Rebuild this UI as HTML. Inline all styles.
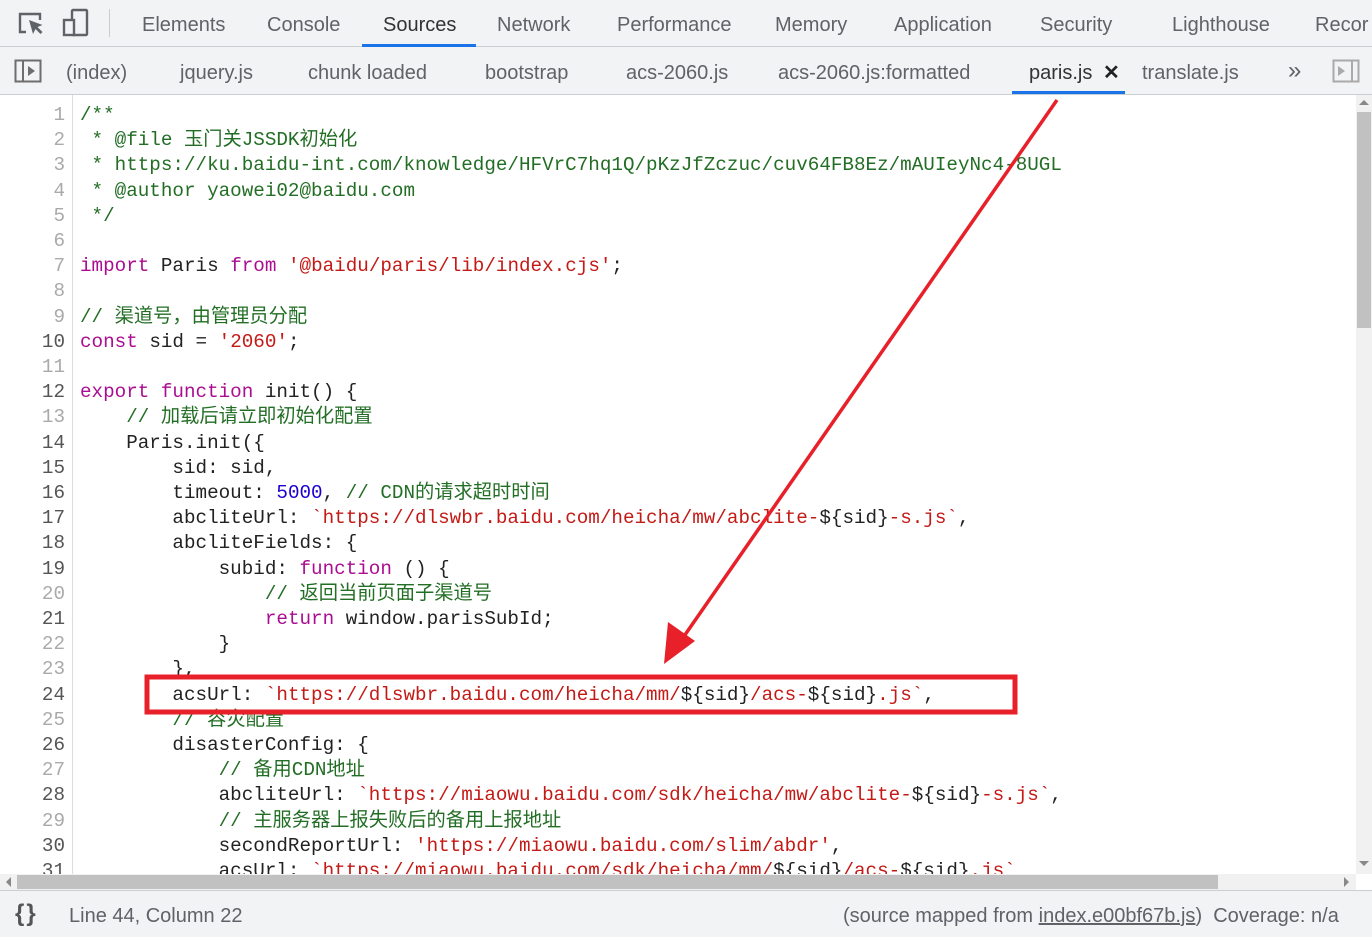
<!DOCTYPE html>
<html><head><meta charset="utf-8"><style>
*{margin:0;padding:0;box-sizing:border-box}
body{width:1372px;height:937px;overflow:hidden;background:#fff;position:relative;font-family:"Liberation Sans","Noto Sans CJK SC",sans-serif}
.bar{position:absolute;left:0;width:1372px;background:#f1f3f4;border-bottom:1px solid #cacdd1}
.t{position:absolute;font-size:20px;color:#5f6368;white-space:nowrap}
.ul{position:absolute;height:3px;background:#1a73e8}
#code{position:absolute;left:0;top:95px;width:1356px;height:779px;overflow:hidden}
.gut{position:absolute;left:72px;top:0;width:1px;height:779px;background:#ddd}
pre{font-family:"Liberation Mono","Noto Sans CJK SC",monospace;font-size:19.25px;line-height:25.2px;white-space:pre}
#nums{position:absolute;left:0;width:65px;top:8px;text-align:right;color:#aaa}
#nums b{font-weight:normal;color:#555}
#src{position:absolute;left:80px;top:8px;color:#222}
.c{color:#236e25}.k{color:#aa0d91}.s{color:#c41a16}.n{color:#1c00cf}
</style></head><body>
<div class="bar" style="top:0;height:47px"></div>
<svg style="position:absolute;left:16px;top:10px" width="30" height="28" viewBox="0 0 30 28"><path d="M10 22H4V4h20v6" fill="none" stroke="#5f6368" stroke-width="2.4"/><path d="M13 10l4 14 2.5-5 5 5 2-2-5-5 5-2z" fill="#5f6368"/></svg>
<svg style="position:absolute;left:62px;top:8px" width="30" height="30" viewBox="0 0 30 30"><rect x="10" y="2" width="15" height="25" rx="1" fill="none" stroke="#5f6368" stroke-width="2.4"/><rect x="2" y="12" width="10" height="15" fill="#f1f3f4" stroke="#5f6368" stroke-width="2.4"/></svg>
<div style="position:absolute;left:109px;top:9px;width:1px;height:28px;background:#ccc"></div>
<div class="t" style="left:142px;top:14px">Elements</div>
<div class="t" style="left:267px;top:14px">Console</div>
<div class="t" style="left:383px;top:14px;color:#333">Sources</div>
<div class="ul" style="left:362px;top:44px;width:114px"></div>
<div class="t" style="left:497px;top:14px">Network</div>
<div class="t" style="left:617px;top:14px">Performance</div>
<div class="t" style="left:775px;top:14px">Memory</div>
<div class="t" style="left:894px;top:14px">Application</div>
<div class="t" style="left:1040px;top:14px">Security</div>
<div class="t" style="left:1172px;top:14px">Lighthouse</div>
<div class="t" style="left:1315px;top:14px">Recor</div>

<div class="bar" style="top:47px;height:48px"></div>
<svg style="position:absolute;left:14px;top:59px" width="28" height="24" viewBox="0 0 28 24"><rect x="1.5" y="1.5" width="25" height="21" fill="none" stroke="#6e6e6e" stroke-width="2"/><line x1="9" y1="2" x2="9" y2="22" stroke="#6e6e6e" stroke-width="2"/><path d="M14 7v10l7-5z" fill="#6e6e6e"/></svg>
<div class="t" style="left:66px;top:62px">(index)</div>
<div class="t" style="left:180px;top:62px">jquery.js</div>
<div class="t" style="left:308px;top:62px">chunk loaded</div>
<div class="t" style="left:485px;top:62px">bootstrap</div>
<div class="t" style="left:626px;top:62px">acs-2060.js</div>
<div class="t" style="left:778px;top:62px">acs-2060.js:formatted</div>
<div class="t" style="left:1029px;top:62px;color:#333">paris.js</div>
<div class="t" style="left:1103px;top:60px;color:#222;font-weight:bold">✕</div>
<div class="ul" style="left:1012px;top:91px;width:113px"></div>
<div class="t" style="left:1142px;top:62px">translate.js</div>
<div class="t" style="left:1288px;top:57px;font-size:24px">»</div>
<svg style="position:absolute;left:1332px;top:59px" width="28" height="24" viewBox="0 0 28 24"><rect x="1.5" y="1.5" width="25" height="21" fill="none" stroke="#aaa" stroke-width="2"/><line x1="20" y1="2" x2="20" y2="22" stroke="#aaa" stroke-width="2"/><path d="M6 7v10l7-5z" fill="#aaa"/></svg>

<div id="code"><div class="gut"></div>
<pre id="nums">1
2
3
4
5
6
7
8
9
<b>10</b>
11
<b>12</b>
13
<b>14</b>
<b>15</b>
<b>16</b>
<b>17</b>
<b>18</b>
<b>19</b>
20
<b>21</b>
22
23
<b>24</b>
25
<b>26</b>
27
<b>28</b>
29
<b>30</b>
<b>31</b></pre>
<pre id="src"><span class="c">/**
 * @file 玉门关JSSDK初始化
 * https://ku.baidu-int.com/knowledge/HFVrC7hq1Q/pKzJfZczuc/cuv64FB8Ez/mAUIeyNc4-8UGL
 * @author yaowei02@baidu.com
 */</span>

<span class="k">import</span> Paris <span class="k">from</span> <span class="s">'@baidu/paris/lib/index.cjs'</span>;

<span class="c">// 渠道号，由管理员分配</span>
<span class="k">const</span> sid = <span class="s">'2060'</span>;

<span class="k">export</span> <span class="k">function</span> init() {
    <span class="c">// 加载后请立即初始化配置</span>
    Paris.init({
        sid: sid,
        timeout: <span class="n">5000</span>, <span class="c">// CDN的请求超时时间</span>
        abcliteUrl: <span class="s">`https://dlswbr.baidu.com/heicha/mw/abclite-</span>${sid}<span class="s">-s.js`</span>,
        abcliteFields: {
            subid: <span class="k">function</span> () {
                <span class="c">// 返回当前页面子渠道号</span>
                <span class="k">return</span> window.parisSubId;
            }
        },
        acsUrl: <span class="s">`https://dlswbr.baidu.com/heicha/mm/</span>${sid}<span class="s">/acs-</span>${sid}<span class="s">.js`</span>,
        <span class="c">// 容灾配置</span>
        disasterConfig: {
            <span class="c">// 备用CDN地址</span>
            abcliteUrl: <span class="s">`https://miaowu.baidu.com/sdk/heicha/mw/abclite-</span>${sid}<span class="s">-s.js`</span>,
            <span class="c">// 主服务器上报失败后的备用上报地址</span>
            secondReportUrl: <span class="s">'https://miaowu.baidu.com/slim/abdr'</span>,
            acsUrl: <span class="s">`https://miaowu.baidu.com/sdk/heicha/mm/</span>${sid}<span class="s">/acs-</span>${sid}<span class="s">.js`</span></pre>
</div>
<div style="position:absolute;left:1356px;top:95px;width:16px;height:779px;background:#f1f1f1"></div>
<div style="position:absolute;left:1357px;top:112px;width:14px;height:216px;background:#c1c1c1"></div>
<div style="position:absolute;left:1359px;top:100px;width:0;height:0;border:5px solid transparent;border-bottom-color:#888;border-top:none"></div>
<div style="position:absolute;left:1359px;top:861px;width:0;height:0;border:5px solid transparent;border-top-color:#888;border-bottom:none"></div>
<div style="position:absolute;left:0;top:874px;width:1356px;height:16px;background:#f1f1f1"></div>
<div style="position:absolute;left:17px;top:875px;width:1201px;height:14px;background:#c1c1c1"></div>
<div style="position:absolute;left:6px;top:877px;border:5px solid transparent;border-right-color:#888;border-left:none"></div>
<div style="position:absolute;left:1344px;top:877px;border:5px solid transparent;border-left-color:#888;border-right:none"></div>
<div class="bar" style="top:890px;height:47px;border-bottom:none;border-top:1px solid #cacdd1"></div>
<div class="t" style="left:15px;top:900px;color:#555;font-weight:bold;font-size:24px;letter-spacing:2px">{}</div>
<div class="t" style="left:69px;top:905px">Line 44, Column 22</div>
<div class="t" style="left:843px;top:905px">(source mapped from <span style="text-decoration:underline">index.e00bf67b.js</span>)&nbsp; Coverage: n/a</div>

<svg style="position:absolute;left:0;top:0" width="1372" height="937">
<rect x="147" y="677" width="868" height="35" fill="none" stroke="#e8202a" stroke-width="5"/>
<line x1="1057" y1="100" x2="680" y2="642" stroke="#e8202a" stroke-width="3.5"/>
<path d="M664 664L668 622L695 641Z" fill="#e8202a"/>
</svg>
</body></html>
